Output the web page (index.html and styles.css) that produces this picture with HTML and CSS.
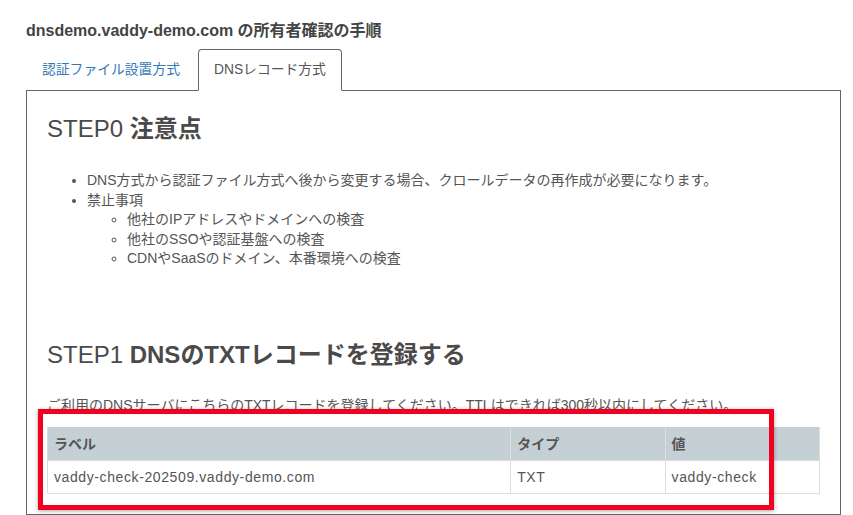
FILE: index.html
```html
<!DOCTYPE html>
<html lang="ja">
<head>
    <meta charset="UTF-8">
    <meta name="viewport" content="width=device-width, initial-scale=1.0">
    <title>所有者確認の手順</title>
    <link rel="stylesheet" href="styles.css">
</head>
<body>
    <div class="page">
        <h1 class="page-title">dnsdemo.vaddy-demo.com の所有者確認の手順</h1>

        <ul class="tabs">
            <li><a href="#">認証ファイル設置方式</a></li>
            <li class="active"><a href="#">DNSレコード方式</a></li>
        </ul>

        <div class="panel">
            <h3 class="step">STEP0 <strong>注意点</strong></h3>
            <ul class="notes">
                <li>DNS方式から認証ファイル方式へ後から変更する場合、クロールデータの再作成が必要になります。</li>
                <li>禁止事項
                    <ul>
                        <li>他社のIPアドレスやドメインへの検査</li>
                        <li>他社のSSOや認証基盤への検査</li>
                        <li>CDNやSaaSのドメイン、本番環境への検査</li>
                    </ul>
                </li>
            </ul>

            <h3 class="step step1">STEP1 <strong>DNSのTXTレコードを登録する</strong></h3>
            <p class="lead">ご利用のDNSサーバにこちらのTXTレコードを登録してください。TTLはできれば300秒以内にしてください。</p>

            <div class="record">
                <table class="record-table">
                    <thead>
                        <tr>
                            <th class="col-label">ラベル</th>
                            <th class="col-type">タイプ</th>
                            <th class="col-value">値</th>
                        </tr>
                    </thead>
                    <tbody>
                        <tr>
                            <td>vaddy-check-202509.vaddy-demo.com</td>
                            <td>TXT</td>
                            <td>vaddy-check</td>
                        </tr>
                    </tbody>
                </table>
                <div class="highlight"></div>
            </div>
        </div>
    </div>
</body>
</html>
```

FILE: styles.css
```css
body {
    font-family: "Liberation Sans", "Noto Sans CJK JP", sans-serif;
    font-size: 14px;
    line-height: 20px;
    color: #555;
    margin: 0;
    padding: 0;
    background-color: #fff;
}

.page {
    width: 815px;
    margin-left: 26px;
    padding-top: 20px;
}

.page-title {
    font-size: 16px;
    line-height: 22px;
    font-weight: bold;
    color: #444;
    margin: 0;
}

.tabs {
    list-style: none;
    margin: 7px 0 0;
    padding: 0;
    display: flex;
}

.tabs li {
    position: relative;
    z-index: 1;
    margin-bottom: -1px;
    margin-right: 2px;
}

.tabs li a {
    display: block;
    padding: 10px 15px;
    line-height: 20px;
    font-size: 13.8px;
    border: 1px solid transparent;
    border-radius: 4px 4px 0 0;
    color: #337ab7;
    text-decoration: none;
}

.tabs li.active a {
    color: #555;
    background-color: #fff;
    border-color: #5d6873;
    border-bottom-color: transparent;
}

.panel {
    border: 1px solid #5d6873;
    padding: 5px 20px 20px;
    min-height: 380px;
}

.step {
    font-size: 24px;
    line-height: 26px;
    font-weight: normal;
    color: #4a4a4a;
    margin: 20px 0 0;
}

.step strong {
    font-weight: bold;
}

.step1 {
    margin-top: 73px;
}

.notes {
    margin: 29px 0 0;
    padding-left: 40px;
    line-height: 19.5px;
}

.notes ul {
    list-style-type: circle;
    margin: 0;
    padding-left: 40px;
}

.lead {
    margin: 27px 0 12px;
}

.record {
    position: relative;
}

.record-table {
    width: 100%;
    border-collapse: collapse;
    border: 1px solid #ddd;
}

.record-table th,
.record-table td {
    text-align: left;
    padding: 6px;
    line-height: 20px;
    border: 1px solid #ddd;
}

.record-table th {
    background-color: #c4d0d4;
    font-weight: bold;
    border-top-color: #c4d0d4;
}

.record-table td {
    letter-spacing: 0.6px;
}

.col-label {
    width: 60%;
}

.col-type,
.col-value {
    width: 20%;
}

.highlight {
    position: absolute;
    left: -9px;
    top: -18px;
    width: 736px;
    height: 101px;
    box-sizing: border-box;
    border: 5px solid #f2001f;
    box-shadow: 0 1px 4px rgba(0, 0, 0, 0.35);
}
```
